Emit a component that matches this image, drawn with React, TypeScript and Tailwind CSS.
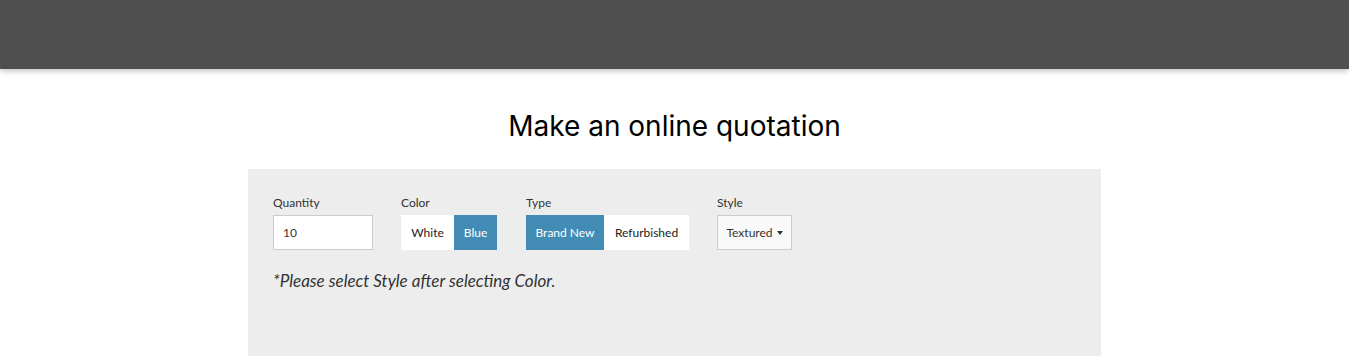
export default function App() {
  return (
    <div className="min-h-screen bg-white font-['Lato',sans-serif]">
      <header className="h-[69px] bg-[#4f4f4f] shadow-[0_2px_6px_rgba(0,0,0,0.25)]" />

      <h1 className="mt-[39px] text-center font-['Inter',sans-serif] text-[28px] leading-[36px] text-black">
        Make an online quotation
      </h1>

      <section className="mx-auto mt-[25px] h-[200px] w-[853px] bg-[#ededed] px-[25px] pt-[27px]">
        <div className="flex gap-7">
          <div>
            <div className="mb-[5px] text-[12px] leading-[14px] text-[#333]">Quantity</div>
            <input
              defaultValue="10"
              className="h-[35px] w-[100px] border border-[#cccccc] bg-white px-[9px] text-[12px] text-[#333] outline-none"
            />
          </div>

          <div>
            <div className="mb-[5px] text-[12px] leading-[14px] text-[#333]">Color</div>
            <div className="flex h-[35px] text-[12px]">
              <button className="w-[53px] bg-white text-[#222]">White</button>
              <button className="w-[43px] bg-[#428bb4] text-white">Blue</button>
            </div>
          </div>

          <div className="ml-px">
            <div className="mb-[5px] text-[12px] leading-[14px] text-[#333]">Type</div>
            <div className="flex h-[35px] text-[12px]">
              <button className="w-[78px] bg-[#428bb4] text-white">Brand New</button>
              <button className="w-[85px] bg-white text-[#222]">Refurbished</button>
            </div>
          </div>

          <div>
            <div className="mb-[5px] text-[12px] leading-[14px] text-[#333]">Style</div>
            <button className="flex h-[35px] w-[75px] items-center justify-center gap-[4px] border border-[#cccccc] bg-[#f9f9f9] text-[12px] text-[#333]">
              Textured
              <span className="h-0 w-0 border-x-[3.5px] border-t-[4px] border-x-transparent border-t-[#333]" />
            </button>
          </div>
        </div>

        <p className="mt-[21px] text-[17px] italic leading-[20px] text-[#333]">
          *Please select Style after selecting Color.
        </p>
      </section>
    </div>
  );
}
